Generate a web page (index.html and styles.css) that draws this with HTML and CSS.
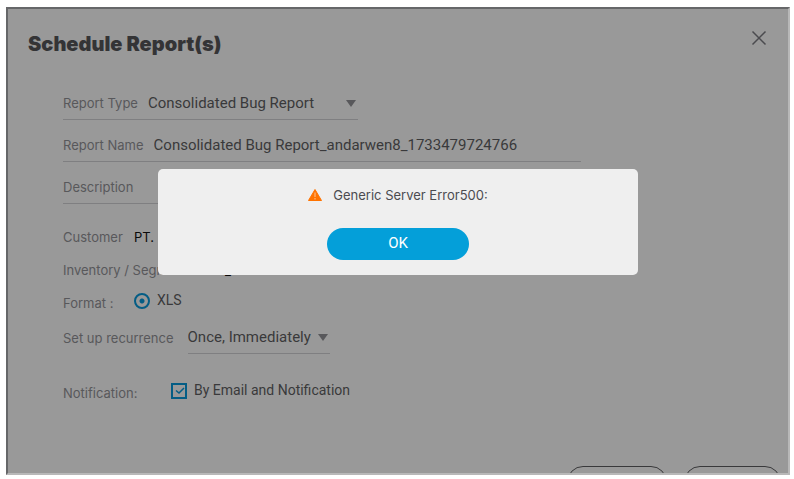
FILE: index.html
```
<!DOCTYPE html>
<html lang="en">
<head>
<meta charset="utf-8">
<title>Schedule Report(s)</title>
<link rel="stylesheet" href="styles.css">
</head>
<body>
<main class="frame">
  <header class="header">
    <h1 class="title">Schedule Report(s)</h1>
    <button class="close" type="button" aria-label="Close">
      <svg width="16" height="16" viewBox="0 0 16 16" fill="none" stroke="currentColor" stroke-width="1.5"><path d="M1.5 1.5l13 13M14.5 1.5l-13 13"/></svg>
    </button>
  </header>
  <form class="form">
    <div class="row lined short">
      <label class="label" for="type">Report Type</label>
      <span class="picker grow"><select id="type" class="value"><option>Consolidated Bug Report</option></select></span>
    </div>
    <div class="row lined">
      <label class="label" for="name">Report Name</label>
      <input id="name" class="value grow" type="text" value="Consolidated Bug Report_andarwen8_1733479724766">
    </div>
    <div class="row lined">
      <label class="label" for="description">Description</label>
      <input id="description" class="value grow" type="text">
    </div>
    <div class="plain-rows">
      <div class="row"><span class="label customer-label">Customer</span><span class="dark">PT.</span></div>
      <div class="row"><span class="label inventory-label">Inventory / Segment</span><span class="dark">_</span></div>
      <div class="row">
        <span class="label format-label">Format :</span>
        <label class="choice"><input class="radio" type="radio" name="format" checked>XLS</label>
      </div>
    </div>
    <div class="row recurrence">
      <label class="label" for="recurrence">Set up recurrence</label>
      <span class="picker underlined"><select id="recurrence" class="value"><option>Once, Immediately</option></select></span>
    </div>
    <div class="row notification">
      <span class="label notification-label">Notification:</span>
      <label class="choice">
        <span class="tick"><input class="checkbox" type="checkbox" checked><svg class="mark" width="10" height="8" viewBox="0 0 10 8" fill="none" stroke="currentColor" stroke-width="1.5"><path d="M1 3.5l3 2.5 5-5"/></svg></span>By Email and Notification
      </label>
    </div>
  </form>
  <footer class="footer">
    <button class="outline cancel" type="button" aria-label="Cancel"></button>
    <button class="outline submit" type="button" aria-label="Submit"></button>
  </footer>
  <section class="dialog" role="alertdialog" aria-labelledby="message">
    <p class="message" id="message">
      <svg width="14" height="12" viewBox="0 0 14 12"><path d="M7 0.5L13.5 11.5H0.5z" fill="#ff7300" stroke="#ff7300" stroke-linejoin="round"/><path d="M7 3.5v4.5M7 9v1.5" stroke="#ffc794"/></svg>
      <span>Generic Server Error500:</span>
    </p>
    <button class="ok" type="button">OK</button>
  </section>
</main>
</body>
</html>
```
FILE: styles.css
```
* { box-sizing: border-box; }

body {
  margin: 0;
  height: 100vh;
  padding: 7px 4px 4px 6px;
  background: #fff;
  font-family: Roboto, "Liberation Sans", sans-serif;
  color: #39393b;
}

button, input, select { font: inherit; color: inherit; }

.frame {
  position: relative;
  height: 100%;
  overflow: hidden;
  background: #999;
  border: 2px solid;
  border-color: #666769 #b8b8b8 #b8b8b8 #666769;
}

.header {
  display: flex;
  justify-content: space-between;
  align-items: flex-start;
  padding: 21px 21px 0 20px;
}

.title {
  margin: 0;
  font: 900 20px/28px Inter, sans-serif;
  color: #343436;
}

.close {
  display: flex;
  padding: 0;
  border: 0;
  background: none;
  color: #4b4b4f;
}

.form {
  width: 573px;
  max-width: 100%;
  padding: 20px 0 0 55px;
  margin-top: 9px;
}

.row {
  display: flex;
  align-items: center;
  height: 33px;
}

.lined {
  gap: 10px;
  margin-bottom: 9px;
  border-bottom: 1px solid #7f7f81;
}

.short { width: 57%; }

.label {
  font: 13px/20px Inter, sans-serif;
  color: #58585b;
  white-space: nowrap;
}

.value {
  width: 100%;
  min-width: 0;
  padding: 0;
  border: 0;
  border-radius: 0;
  background: none;
  outline: 0;
  appearance: none;
  font-size: 15px;
  line-height: 20px;
}

.grow { flex: 1; }

.picker {
  position: relative;
  display: flex;
}

.picker::after {
  content: "";
  position: absolute;
  top: 7px;
  right: 2px;
  border: 5px solid transparent;
  border-top: 7px solid #58585b;
  border-bottom: 0;
  pointer-events: none;
}

.plain-rows { margin-top: 16px; }

.dark {
  font: 13px/20px Inter, sans-serif;
  color: #0a0a0a;
}

.customer-label { width: 71px; }
.inventory-label { width: 162px; }
.format-label { width: 71px; }
.notification-label { width: 108px; }

.choice {
  display: flex;
  align-items: center;
  gap: 7px;
  padding-bottom: 5px;
  font-size: 14px;
  line-height: 20px;
}

.radio {
  width: 16px;
  height: 16px;
  margin: 2px 0 0;
  appearance: none;
  border: 2px solid #045d85;
  border-radius: 50%;
  background: radial-gradient(circle, #045d85 2px, transparent 3px);
}

.tick {
  position: relative;
  display: flex;
}

.checkbox {
  width: 16px;
  height: 16px;
  margin: 2px 0 0;
  appearance: none;
  border: 2px solid #045d85;
}

.mark {
  position: absolute;
  top: 6px;
  left: 4px;
  color: #045d85;
}

.recurrence {
  gap: 14px;
  margin-top: 2px;
}

.underlined {
  width: 142px;
  height: 33px;
  align-items: center;
  border-bottom: 1px solid #7f7f81;
}

.underlined::after { top: 13px; }

.notification { margin-top: 22px; }

.footer {
  display: flex;
  justify-content: flex-end;
  gap: 17px;
  padding: 57px 7px 20px 0;
}

.outline {
  height: 32px;
  width: 100px;
  border: 1px solid #39393b;
  border-radius: 16px;
  background: none;
}

.submit { width: 97px; }

.dialog {
  position: absolute;
  top: 160px;
  left: 50%;
  transform: translateX(-50%);
  width: 480px;
  max-width: 100%;
  padding: 16px 0 15px;
  display: flex;
  flex-direction: column;
  align-items: center;
  gap: 23px;
  border-radius: 5px;
  background: #efefef;
}

.message {
  display: flex;
  align-items: center;
  gap: 11px;
  margin: 0;
  font: 13px/20px Inter, sans-serif;
  color: #4b4b4f;
}

.ok {
  width: 142px;
  height: 32px;
  padding: 0 0 2px;
  border: 0;
  border-radius: 16px;
  background: #049fd9;
  color: #fff;
  font-size: 15px;
}
```
